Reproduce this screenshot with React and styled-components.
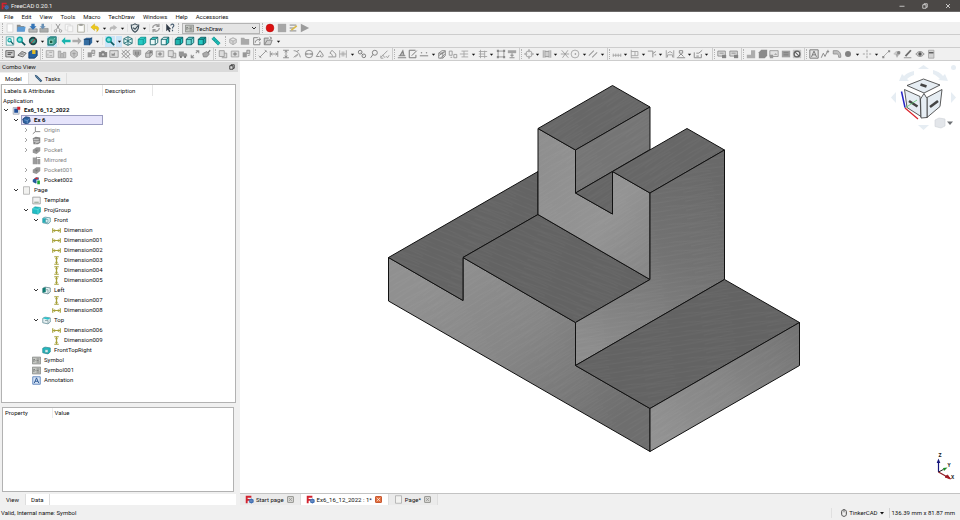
import React from "react";
import styled, { createGlobalStyle, css } from "styled-components";

const GlobalStyle = createGlobalStyle`
  * { box-sizing: border-box; }
  body {
    margin: 0;
    background: #f0f0f0;
    color: #111;
    font-family: Roboto, "Noto Sans", sans-serif;
    font-size: 6px;
    line-height: 10px;
  }
  button, select { font: inherit; color: inherit; }
`;

/* ---------- icons (12 x 12 grid) ---------- */

const TEAL = "#12a5a2";
const DARK = "#0b5a60";

const box = (faces) => (
  <>
    <path d="M1.5 4 4.5 1.5h6v6.500L7.500 10.500h-6z" fill={faces.body || "#e9f8f7"} />
    {faces.top && <path d="M1.500 4 4.500 1.500h6L7.500 4z" fill="#35d3cc" />}
    {faces.front && <path d="M1.500 4h6v6.500h-6z" fill="#27c9c3" />}
    {faces.right && <path d="M7.500 4l3-2.500V8l-3 2.500z" fill="#27c9c3" />}
    <path d="M1.500 4 4.500 1.500h6V8L7.500 10.500h-6zM1.500 4h6v6.500M7.500 4l3-2.500" fill="none" stroke={faces.edge || DARK} />
  </>
);

const glyphs = {
  newFile: <path d="M2.500 1h7v10h-7z" fill="#fdfdfd" stroke="#d2d2d2" />,
  folder: (
    <>
      <path d="M1 2h4l1 1.500h4V10H1z" fill="#8b8b88" />
      <path d="M2 4.500h9.500L10.500 10.500H1z" fill="#5c9bd4" />
    </>
  ),
  save: (
    <>
      <path d="M1 7h10v4H1z" fill="#b9bbbb" stroke="#777" strokeWidth=".7" />
      <path d="M4 1h4v3h2.200L6 8.200 1.800 4H4z" fill="#3575b7" />
    </>
  ),
  saveAs: (
    <>
      <path d="M1 6.500h10V11H1z" fill="#a9acac" stroke="#888" strokeWidth=".7" />
      <path d="M3 1h3v3h2L4.500 7.500 1 4h2z" fill="#6990b5" />
    </>
  ),
  cut: (
    <g fill="none" stroke="#989898">
      <path d="M3.500 1 8 8M8.500 1 4 8" strokeWidth="1.200" />
      <circle cx="3" cy="9.500" r="1.500" />
      <circle cx="9" cy="9.500" r="1.500" />
    </g>
  ),
  copy: (
    <g fill="#f7f7f7" stroke="#d7d7d7">
      <path d="M1.500 1.500h6v7h-6z" />
      <path d="M4.500 3.500h6v7h-6z" />
    </g>
  ),
  paste: (
    <>
      <path d="M2 2h8v9H2z" fill="#fbfbf9" stroke="#a3a397" />
      <path d="M4 1h4v2.500H4z" fill="#a0a09b" />
    </>
  ),
  undo: <path d="M5.500 1 1 5l4.500 4V6.500c3 0 3.500 1.500 2.500 4C12 7.500 11 3.500 5.500 3.500z" fill="#edc91b" stroke="#c9a000" strokeWidth=".5" />,
  redo: <path d="M6.500 2 11 5.500 6.500 9V7C3.500 7 3 8 4 10.500.500 7.500 2 4 6.500 4z" fill="#b9b9b9" />,
  shield: (
    <g fill="none" stroke="#3b4c57" strokeWidth="1.300">
      <path d="M1.500 2.500C4 2.500 5 1.500 6 1c1 .500 2 1.500 4.500 1.500 0 4-1 7-4.500 8.500C2.500 9.500 1.500 6.500 1.500 2.500z" fill="#dfe5e6" />
      <path d="M3.500 5.500 6 7.500 9.500 3.500" />
    </g>
  ),
  refresh: (
    <g fill="none" stroke="#979797" strokeWidth="1.500">
      <path d="M2 6a4 4 0 0 1 7-2.500M10 6a4 4 0 0 1-7 2.500" />
      <path d="M9.500 1v3h-3M2.500 11V8h3" />
    </g>
  ),
  whats: (
    <>
      <path d="M1.500 1v9l2-2 1.500 3 1.500-1L5 7.500h2.500z" fill="#303a45" />
      <path d="M7 3c0-2.500 4-2 3.500.500C10.300 4.500 9 4.500 9 6.500M9 8v2" fill="none" stroke="#445a6e" strokeWidth="1.400" />
    </>
  ),
  record: <circle cx="6" cy="6" r="4.700" fill="#dc1010" stroke="#b10a0a" strokeWidth=".6" />,
  stop: <path d="M1 1h10v10H1z" fill="#a7a7a7" />,
  edit: (
    <>
      <path d="M2 2.500h8M2 6h5M2 9.500h8" stroke="#888" strokeWidth="1.200" />
      <path d="M4 8.500 10.500 3.500" stroke="#d8b84b" strokeWidth="2" />
    </>
  ),
  play: <path d="M1 1v10l10-5z" fill="#9c9c9c" />,

  fitAll: (
    <>
      <path d="M1.500 1h9v10h-9z" fill="#eefafa" stroke="#3b8e91" strokeWidth=".8" />
      <circle cx="5.500" cy="5" r="2" fill="#b4efec" stroke={TEAL} strokeWidth="1.300" />
      <path d="M7 6.500 10 10" stroke={DARK} strokeWidth="1.500" />
    </>
  ),
  zoomSel: (
    <>
      <circle cx="4.500" cy="4.500" r="3" fill="#7fdcd8" stroke={TEAL} strokeWidth="1.700" />
      <path d="M7 7 11 11" stroke={DARK} strokeWidth="2" />
    </>
  ),
  drawStyle: (
    <>
      <circle cx="6" cy="6" r="5" fill="#20464a" />
      <path d="M3 4.500 6 3l3 1.500v3L6 9 3 7.500z" fill="#3b9c8b" />
      <path d="M3 9 9 3" stroke="#b44" strokeWidth="1.200" />
    </>
  ),
  bbox: (
    <>
      <path d="M1 3 4 1h7v7l-3 3H1z" fill="#3c9f91" stroke="#176a6b" />
      <path d="M3 5h4v4H3zM8 4l2-1.500" fill="#1e5d44" stroke="#b9efe6" strokeWidth=".8" />
    </>
  ),
  back: <path d="M5 1.500.500 6 5 10.500V7.500h6.500v-3H5z" fill="#19b4ae" />,
  forward: <path d="M7 1.500 11.500 6 7 10.500V7.500H.500v-3H7z" fill="#ababab" />,
  link: (
    <>
      <path d="M1 4 4 2h7v6l-3 3H1z" fill="#356da1" />
      <path d="M1 4h7v7M8 4l3-2" fill="none" stroke="#1b3e63" />
    </>
  ),
  iso: (
    <path d="M6 .800 11 3.200V8.800L6 11.200 1 8.800V3.200zM1 3.200 6 5.500l5-2.300M6 .800v10.400M1 8.800 6 6.500l5 2.300" fill="#dff6f5" stroke={DARK} strokeWidth=".9" />
  ),
  front: box({ front: true, top: true, right: true, body: "#35d3cc", edge: "#12938f" }),
  top: box({ top: true }),
  right: box({ right: true }),
  rear: box({ body: "#1fb5ae", right: true }),
  bottom: box({ body: "#72d9d4" }),
  left: box({ front: true, body: "#17a9a4" }),
  measure: (
    <>
      <path d="M1 3.500 3.500 1 11 8.500 8.500 11z" fill="#1cbab4" stroke="#0d8583" strokeWidth=".7" />
      <path d="M4 5.500l1-1M6 7.500l1-1" stroke="#075b5c" strokeWidth=".7" />
    </>
  ),
  part: <path d="M2 4 6 2l4 2v4L6 10.500 2 8zM2 4l4 2 4-2M6 6v4" fill="#d4d4d4" stroke="#a5a5a5" strokeWidth=".9" />,
  group: <path d="M1 2h4l1 1.500h5V10.500H1z" fill="#a9a9a9" />,
  linkMake: (
    <g fill="none" stroke="#808080" strokeWidth="1.100">
      <path d="M7 2H2v8.500h7.500V7" />
      <path d="M4 8c0-3 2-4 6-4M8 1.500 10.500 4 8 6" />
    </g>
  ),
  linkGroup: (
    <g fill="none" stroke="#808080" strokeWidth="1.100">
      <path d="M7 2.500H1.500v8H9L11 5H5L2 10" fill="#cfcfcf" />
      <path d="M8 1l2.500 1.500L8 4" />
    </g>
  ),

  pageDef: (
    <>
      <path d="M1 2h10v7.500H1z" fill="#d2d2d2" stroke="#555" />
      <path d="M3 4.500h6M3 6.500h4M7 10h4" stroke="#333" />
    </>
  ),
  pageTpl: (
    <g fill="#cfcfcf" stroke="#555">
      <path d="M1 7.500 6 3l5 2-4 4.500z" />
      <path d="M4 6h4" />
    </g>
  ),
  redraw: (
    <>
      <path d="M1 4 4 2h7v6L8 11H1z" fill="#2562a0" stroke="#143a66" />
      <path d="M5 1h4v5H5z" fill="#e4bd28" />
    </>
  ),
  sheet: <path d="M1.500 2h9v8h-9zM3.500 8V5.500M5.500 8h3M5 4h3.500" fill="#dedede" stroke="#a2a2a2" />,
  bars: <path d="M1.500 10.500v-8h3v3h3V4h3v6.500zM4.500 6v4M7.500 6v4" fill="#c2c2c2" stroke="#a0a0a0" />,
  disc: (
    <g stroke="#9a9a9a" fill="#c7c7c7">
      <path d="M2 3.500 6 1l4 2.500V8l-4 3-4-3z" />
      <path d="M4 5.500h4M6 4v5" />
    </g>
  ),
  chip: (
    <>
      <path d="M2 4h5v6H2z" fill="#979797" />
      <path d="M7 1.500h3.500v4H7zM8 8l3-1" fill="#c8c8c8" stroke="#8a8a8a" />
    </>
  ),
  camera: (
    <>
      <path d="M1 3.500h2.500L4.500 2h3l1 1.500H11V10H1z" fill="#8a8a8a" />
      <circle cx="6" cy="6.500" r="2" fill="#ccc" stroke="#666" strokeWidth=".7" />
    </>
  ),
  image: (
    <>
      <path d="M1 2h10v8H1z" fill="#ddd" stroke="#8d8d8d" />
      <path d="M3 8V5l2 1 2-2v4z" fill="#8e8e8e" />
    </>
  ),
  hatch: <path d="M1 1.500 10.500 11M1 5.500 6.500 11M5.500 1 11 6.500M1 10.500 10.500 1M1 6 6 1M6 11l5-5" stroke="#8f8f8f" strokeWidth="1.100" />,
  tree: (
    <>
      <path d="M1.500 1.500h9v5L6 10 1.500 6.500z" fill="#b4b4b4" stroke="#8b8b8b" strokeWidth=".8" />
      <path d="M4 3v4M6 3v6M8 3v4" stroke="#707070" />
    </>
  ),
  section: (
    <>
      <path d="M2 5 5 2h5v5L7 10H2zM2 5h5v5" fill="#c9c9c9" stroke="#888" />
      <circle cx="8" cy="4" r="1.500" fill="#7b7b7b" />
    </>
  ),
  detail: (
    <>
      <path d="M1.500 2.500h9v7h-9z" fill="#dedede" stroke="#a0a0a0" />
      <path d="M3.500 6h5M6 3.800v4.400" stroke="#7d7d7d" strokeWidth="1.300" />
    </>
  ),
  view: <path d="M1.500 2h6v7h-6zM7.500 5h3v5.500h-6" fill="#dcdcdc" stroke="#959595" />,
  truck: (
    <>
      <path d="M1 3h6v6H1zM7 5h3l1 2v2H7z" fill="#959595" />
      <circle cx="3.500" cy="9.500" r="1.200" fill="#666" />
      <circle cx="8.500" cy="9.500" r="1.200" fill="#666" />
    </>
  ),
  move: <path d="M2 10 4.500 7.500M7 5l3-3M7 2h3.500v3M1.500 7v3.500H5" fill="none" stroke="#909090" strokeWidth="1.300" />,
  share: (
    <>
      <path d="M2 5.500 7 3l3 3-3 3.500H3z" fill="#aaa" stroke="#868686" />
      <path d="M8 5 11 1.500" stroke="#777" strokeWidth="1.500" />
    </>
  ),
  length: <path d="M2 10 10 2M1 8l3 3M8 1l3 3" stroke="#999" strokeWidth="1.200" />,
  horiz: <path d="M1.500 2.500v7M10.500 2.500v7M1.500 6h9M4 4.500 2 6l2 1.500M8 4.500 10 6 8 7.500" fill="none" stroke="#969696" strokeWidth="1.100" />,
  vert: <path d="M2.500 1.500h7M2.500 10.500h7M6 1.500v9M4.500 4 6 2l1.500 2M4.500 8 6 10l1.500-2" fill="none" stroke="#8c8c8c" strokeWidth="1.100" />,
  radius: <path d="M2 10 7 6M2 2c4 0 7 3 8 8M4 9.500l3.500-3M5.500 3 8.500 1.500" fill="none" stroke="#999" strokeWidth="1.200" />,
  diameter: (
    <g fill="none" stroke="#8c8c8c" strokeWidth="1.100">
      <circle cx="6" cy="6" r="4.500" />
      <path d="M1.500 6h9M3.500 4.800v2.400M8.500 4.800v2.400" />
    </g>
  ),
  angle: <path d="M1.500 9 6 2l3 4c1.500 2 1 3.500-1 3.500-2 0-2-2-.500-2.500M1.500 9h4" fill="none" stroke="#929292" strokeWidth="1.200" />,
  angle3: <path d="M1.500 9.500h9V6L6 1.500 3.500 5c2 .500 3 2 3 4" fill="none" stroke="#929292" strokeWidth="1.100" />,
  extent: <path d="M2 1.500v9M10 1.500v9M5 3v6M7 3v6M2 6h8" fill="none" stroke="#a2a2a2" />,
  chain: (
    <g fill="none" stroke="#808080" strokeWidth="1.200">
      <circle cx="3.800" cy="3.800" r="2.200" />
      <circle cx="8.200" cy="8.200" r="2.200" />
      <path d="M4.500 4.500l3 3" />
    </g>
  ),
  balloon: (
    <g fill="none" stroke="#858585" strokeWidth="1.200">
      <circle cx="7" cy="4.500" r="3" />
      <path d="M4.800 6.500 2 10.500" />
    </g>
  ),
  axo: <path d="M1.500 9.500 9 2M3 7l3 3.500M7 8.500l2 2 2-3M1 8v3h3" fill="none" stroke="#999" strokeWidth="1.100" />,
  finish: <path d="M3.500 8 7 2l1.500 6zM1 10.500h10M2 8h8" fill="#b7b7b7" stroke="#848484" strokeWidth="1.300" />,
  note: <path d="M9 1.500H1.500v9h8V7M4.500 8 10.500 2" fill="none" stroke="#7b7b7b" strokeWidth="1.200" />,
  cosmetic: (
    <g fill="#8d8d8d">
      <path d="M1 7.500h10v1.300H1z" />
      <circle cx="3" cy="4.500" r=".9" />
      <circle cx="9" cy="4.500" r=".9" />
    </g>
  ),
  cube: <path d="M2 5 6 2h4v6l-3 3H2zM4 6l5-3M2 8l8-5M4 11l6-5M2 5h5v6" fill="none" stroke="#898989" strokeWidth="1.100" />,
  blocks: <path d="M1.500 2.500h3.500v5H1.500zM7 6.500h3.500v4H7zM3 10h2" fill="none" stroke="#939393" />,
  centre: <path d="M3 2.500h8M1 6h10M3 9.500h8M6 2.500v7" fill="none" stroke="#a0a0a0" />,
  lines: <path d="M1 3h10M1 6h7M1 9h10M3 1v10M8 2v9" fill="none" stroke="#a0a0a0" />,
  frame: (
    <>
      <path d="M2.500 2.500h7v7h-7z" fill="none" stroke="#8c8c8c" />
      <path d="M1 1h2.500v2.500H1zM8.500 1H11v2.500H8.500zM1 8.500h2.500V11H1zM8.500 8.500H11V11H8.500z" fill="#8a8a8a" />
    </>
  ),
  weld: (
    <>
      <path d="M1 1.500h10V5H1z" fill="#a4a4a4" />
      <path d="M3 10.500h6M6 5v5M4 7.500h4" fill="none" stroke="#8f8f8f" strokeWidth="1.200" />
    </>
  ),
  target: (
    <g fill="none" stroke="#969696">
      <circle cx="6" cy="6" r="3.800" />
      <path d="M6 0v4M6 8v4M0 6h4M8 6h4" />
    </g>
  ),
  thread: (
    <>
      <path d="M3.500 2h5v8h-5z" fill="#cfcfcf" />
      <path d="M1.500 1.500v9M3.500 1.500v9M8.500 1.500v9M10.500 1.500v9M3.500 3h5M3.500 9h5" fill="none" stroke="#9c9c9c" strokeWidth="1.100" />
    </>
  ),
  cross: <path d="M2 1.500 10 10.500M9.500 1.500 3 10.500M1 6h10" fill="none" stroke="#979797" />,
  circle: (
    <>
      <circle cx="6" cy="6" r="4.700" fill="none" stroke="#a0a0a0" />
      <circle cx="6.500" cy="6" r="1" fill="#888" />
    </>
  ),
  parallel: <path d="M1 8 7 2M5 10l6-6" stroke="#9b9b9b" strokeWidth="1.300" />,
  chainDim: <path d="M1 7.500h10M1.500 5.500v4M4.500 5.500v4M7.500 5.500v4M10.500 5.500v4" stroke="#a0a0a0" />,
  coord: <path d="M1.500 1v10M1.500 3h8v5h-8M6 3v5M1.500 10.500h9" fill="none" stroke="#a0a0a0" />,
  chamfer: <path d="M1 2.500h6V10M7 5.500l3.500-2.500M9 7h2" fill="none" stroke="#949494" strokeWidth="1.200" />,
  arc: <path d="M1.500 1.500v9M10.500 1.500v9M3 5l3-2 3 2M3 10V7h6v3" fill="none" stroke="#969696" />,
  person: <path d="M4 5V2h4v3zM3 9l3-3 3 3M1 10.500h10" fill="none" stroke="#8e8e8e" strokeWidth="1.200" />,
  plot: <path d="M1.500 4v6.500H10V6M4 8.500h3M4 5h3l4-3.500" fill="none" stroke="#8f8f8f" strokeWidth="1.200" />,
  stack: (
    <>
      <path d="M1 2.500h9v6H1zM3 5h5" fill="#dadada" stroke="#888" />
      <path d="M6 7h5v4H6z" fill="#858585" />
    </>
  ),
  stairs: <path d="M1 7h5V1.500h5V11H1z" fill="#acacac" />,
  stairsDark: <path d="M1 4 4 1h7v7l-3 3H1z" fill="#898989" />,
  landscape: (
    <>
      <path d="M1 2h10v7H1z" fill="#e2e2e2" stroke="#919191" />
      <path d="M1 7h4v4H1zM6 7l2-2 2 2z" fill="#989898" />
    </>
  ),
  filled: (
    <>
      <path d="M1 2h10v8H1z" fill="#9e9e9e" />
      <path d="M3 4.500h6M3 7h6" stroke="#777" />
    </>
  ),
  forbid: (
    <>
      <path d="M1 1h10v10H1z" fill="#c4c4c4" />
      <circle cx="6" cy="6" r="3.500" fill="#eee" stroke="#606060" strokeWidth="1.500" />
      <path d="M3.500 3.500l5 5" stroke="#606060" strokeWidth="1.300" />
    </>
  ),
  letterA: <path d="M1 1h10v10H1zM3 9.500 6 2.500l3 7M4 7h4" fill="#e4e4e4" stroke="#7d7d7d" strokeWidth="1.200" />,
  leader: <path d="M1.500 10.500 4 5l2 4 3-6.500M8 3h3M9.500 1v4" fill="none" stroke="#8e8e8e" strokeWidth="1.200" />,
  rich: <path d="M1.500 2h5c3 1 4.500 4 4 8H8c0-3-1-4-2.500-4h-4z" fill="#bebebe" stroke="#8b8b8b" />,
  vertex: <circle cx="6" cy="6" r="3.600" fill="#828282" />,
  midline: <path d="M6 1v3M6 5v2M6 8v3M1 6h2.500M8.500 6H11" stroke="#929292" />,
  line2: (
    <>
      <path d="M3 9 9 3" stroke="#a5a5a5" />
      <path d="M1.500 8.500h2.500V11H1.500zM8.500 1.500H11V4H8.500z" fill="#8b8b8b" />
    </>
  ),
  eraser: (
    <>
      <path d="M1.500 6 5 2.500h5V6L7 9z" fill="#c7c7c7" />
      <circle cx="8" cy="4.500" r="2" fill="#858585" />
      <path d="M6 6v4" stroke="#888" />
    </>
  ),
  pen: (
    <>
      <path d="M3 8.500 9.500 1.500" stroke="#6c6c6c" strokeWidth="2.200" />
      <path d="M1 10.500h9" stroke="#8a8a8a" />
    </>
  ),
  eye: (
    <>
      <path d="M1 6c3-4 7-4 10 0-3 4-7 4-10 0z" fill="#cacaca" stroke="#8a8a8a" />
      <circle cx="6" cy="6" r="2" fill="#555" />
    </>
  ),
  drum: (
    <>
      <path d="M3 1.500h6.500v9.500H3z" fill="#d2d2d2" stroke="#a3a3a3" />
      <path d="M3.500 4.500h5.500" stroke="#555" strokeWidth="1.600" />
    </>
  ),

  document: (
    <>
      <path d="M1.500 2h8v9h-8z" fill="#dfe3ec" stroke="#7c8697" strokeWidth=".7" />
      <path d="M3 3.500h5v5.500H3z" fill="#22529a" />
      <path d="M7 1h4v4H7z" fill="#d3202b" />
    </>
  ),
  body: (
    <>
      <path d="M1 4 5 1l5 1 1 5-4 4-5-2z" fill="#2e62a1" stroke="#173c6d" />
      <path d="M3 5 7 6l3-2M7 6v4" fill="none" stroke="#91b7df" strokeWidth=".8" />
    </>
  ),
  origin: <path d="M4.500 1v6.500H11M4.500 7.500 1 10.500" fill="none" stroke="#808080" strokeWidth="1.200" />,
  pad: (
    <>
      <path d="M1 3 5 1l6 1v7L8 11H2z" fill="#858585" />
      <path d="M2 4.500h7M2 7h7M4 9.500l6-2" stroke="#e1e1e1" />
    </>
  ),
  pocket: (
    <>
      <path d="M1 5 6 1.500h5v5L6 10.500 1 9z" fill="#969696" />
      <path d="M4 5h4L6 7.500z" fill="#777" />
    </>
  ),
  mirrored: (
    <>
      <path d="M1 2h4.500v9H1zM7 4h4v7H7z" fill="#9b9b9b" />
      <path d="M6 1v10M7 2h4" stroke="#777" />
    </>
  ),
  pocketOn: (
    <>
      <path d="M1 5 5 2h4v7l-4 1-4-2z" fill="#24599b" />
      <path d="M3 3.500 6 1.500l3 1-2.500 2z" fill="#c9303a" />
      <path d="M6 5h5v6.500H6z" fill="#fff" />
      <path d="M7 6h3.500v5H7z" fill="#1aa53a" />
    </>
  ),
  page: <path d="M2 1h8v10H2z" fill="#f2f2f0" stroke="#a7a7a7" />,
  template: (
    <>
      <path d="M1 1.500h10v9H1z" fill="#f1f1f1" stroke="#909090" />
      <path d="M3 7.500h6v2H3z" fill="#a7b5a7" />
    </>
  ),
  projGroup: (
    <>
      <path d="M.500 3.500 4 1l7.500 1v6L8 11 .500 9.500z" fill="#20bdc4" stroke="#158b94" strokeWidth=".6" />
      <path d="M.500 3.500 8 4.500l3.500-2.500M8 4.500V11" fill="none" stroke="#7ce8ea" strokeWidth=".8" />
    </>
  ),
  projFront: (
    <>
      <path d="M1 3 4 1.500l7 1v5.500L8 10.500 1 9z" fill="#e4f3f4" stroke="#4b8f9b" />
      <path d="M1 3h5v6H1z" fill="#23aeb8" />
      <path d="M4.500 4.500h3.500v4H4.500z" fill="#d5f2f4" stroke="#44808a" strokeWidth=".7" />
    </>
  ),
  projLeft: (
    <>
      <path d="M1 3 4 1.500l7 1v5.500L8 10.500 1 9z" fill="#e4f3f4" stroke="#5a7f88" />
      <path d="M1 3l4-1.500V8l-4 1z" fill="#0f7b72" />
      <path d="M5 5h3v5" fill="none" stroke="#7c949a" />
    </>
  ),
  projTop: (
    <>
      <path d="M1 3 4 1.500l7 1v5.500L8 10.500 1 9z" fill="#e4eef0" stroke="#5d8a94" />
      <path d="M1 3 4 1.500l7 1L8 5z" fill="#25c3cc" />
      <path d="M4 6h4v4" fill="none" stroke="#7c949a" />
    </>
  ),
  projIso: (
    <>
      <path d="M1 3 4 1.500l7 1v5.500L8 10.500 1 9z" fill="#1fb9bf" stroke="#2c8790" />
      <path d="M4 5h4v3.500H4z" fill="#dff5f5" stroke="#4c8f96" strokeWidth=".7" />
    </>
  ),
  symbol: (
    <>
      <path d="M.500 1.500h11v9H.500z" fill="#c3c6c1" stroke="#7c7f7c" />
      <path d="M2.500 8V4l2 2M6 4h4M6 6h3M6 8h4" fill="none" stroke="#666" strokeWidth=".9" />
    </>
  ),
  annotation: (
    <>
      <path d="M1 1h10v10H1z" fill="#d7e4f6" stroke="#3d6baf" />
      <path d="M3 9.500 6 2.500l3 7M4 7h4" fill="none" stroke="#21508f" strokeWidth="1.200" />
    </>
  ),
  dimH: <path d="M1 3v6M11 3v6M1 6h10M3.500 4.500v3M8.500 4.500v3" fill="none" stroke="#a7a13a" strokeWidth="1.600" />,
  dimV: <path d="M3 1h6M3 11h6M6 1v10M4.500 3.500h3M4.500 8.500h3" fill="none" stroke="#a7a13a" strokeWidth="1.600" />,
  freecad: (
    <>
      <path d="M1 1h7.500v2.500h-5v1.800h3v2.200h-3V11H1z" fill="#d2232f" />
      <circle cx="8.500" cy="8" r="2.200" fill="none" stroke="#3f6fb4" strokeWidth="1.800" />
      <path d="M8.500 4.500v7M5 8h7M6 5.500l5 5M11 5.500l-5 5" stroke="#3f6fb4" strokeWidth=".7" />
    </>
  ),
  pencilBlue: (
    <>
      <path d="M1 1 4 2l7 7-2 2-7-7z" fill="#2b5276" />
      <path d="M3 3l6 6" stroke="#7ea5c4" strokeWidth=".8" />
    </>
  ),
  caret: <path d="M2 4h8L6 9z" fill="currentColor" />,
  chevDown: <path d="M2 4l4 4 4-4" fill="none" stroke="currentColor" strokeWidth="1.700" />,
  chevRight: <path d="M4 2l4 4-4 4" fill="none" stroke="#8a8a8a" strokeWidth="1.600" />,
  minimise: <path d="M1 6.500h10" stroke="currentColor" strokeWidth="1.400" />,
  restore: <path d="M1.500 3.500h6.500v7H1.500zM4 3.500v-2h6.500v7H8" fill="none" stroke="currentColor" strokeWidth="1.400" />,
  close: <path d="M2 2l8 8M10 2l-8 8" stroke="currentColor" strokeWidth="1.500" />,
  mouse: (
    <g fill="none" stroke="#333">
      <path d="M2.500 4c0-4 7-4 7 0v4c0 4-7 4-7 0z" strokeWidth="1.300" />
      <path d="M6 1v4" />
    </g>
  ),
};

const Svg = styled.svg`
  display: block;
  flex: none;
  width: ${(p) => p.$size}px;
  height: ${(p) => p.$size}px;
`;

const Icon = ({ name, size = 9 }) => (
  <Svg viewBox="0 0 12 12" $size={size} aria-hidden="true">
    {glyphs[name]}
  </Svg>
);

/* ---------- frame ---------- */

const Window = styled.div`
  display: flex;
  flex-direction: column;
  min-height: 100vh;
`;

const plainButton = css`
  border: 0;
  padding: 0;
  background: none;
  display: flex;
  align-items: center;
  justify-content: center;
`;

const TitleBar = styled.header`
  display: flex;
  align-items: center;
  height: 12px;
  padding: 0 9px 0 1px;
  gap: 2px;
  background: #4b4846;
  border-bottom: 1px solid #6b6968;
  color: #f0f0f0;
`;

const Title = styled.h1`
  flex: 1;
  margin: 0;
  font-size: 6px;
  font-weight: 400;
`;

const WindowButtons = styled.div`
  display: flex;
  gap: 16px;
`;

const WindowButton = styled.button`
  ${plainButton}
  width: 7px;
  height: 8px;
`;

const MenuBar = styled.nav`
  display: flex;
  height: 10px;
  padding: 0 4px;
  gap: 8px;
  background: #fff;
`;

const MenuButton = styled.button`
  ${plainButton}
`;

const Toolbar = styled.div`
  display: flex;
  height: 13px;
  padding-left: 1px;
  background: #f0f0f0;
  border-bottom: 1px solid #cdcdcd;
`;

const ToolGroup = styled.div`
  display: flex;
  align-items: center;
  width: ${(p) => p.$width}px;
  padding: 0 2px 0 1px;
  border-right: 1px solid ${(p) => (p.$divided ? "#cdcdcd" : "transparent")};
`;

const Handle = styled.span`
  flex: none;
  align-self: center;
  width: 2px;
  height: 10px;
  margin-right: 1px;
  border-left: 1px dotted #b4b4b4;
`;

const ToolItems = styled.div`
  display: flex;
  flex: 1;
  align-items: center;
  justify-content: space-between;
`;

const ToolButton = styled.button`
  ${plainButton}
  width: ${(p) => (p.$narrow ? 6 : 10)}px;
  height: 11px;
  background: ${(p) => (p.$active ? "#cbe5f8" : "none")};
`;

const ToolDivider = styled.span`
  width: 1px;
  height: 8px;
  background: #e2e2e2;
`;

const Tools = ({ items, width, divided }) => (
  <ToolGroup $width={width} $divided={divided}>
    <Handle />
    <ToolItems>
      {items.split(" ").map((entry, i) => {
        if (entry === "|") return <ToolDivider key={i} />;
        const active = entry.endsWith("*");
        const name = entry.replace("*", "");
        const narrow = name === "v";
        return (
          <ToolButton key={i} $narrow={narrow} $active={active} aria-label={narrow ? "More options" : name}>
            <Icon name={narrow ? "caret" : name} size={narrow ? 5 : 10} />
          </ToolButton>
        );
      })}
    </ToolItems>
  </ToolGroup>
);

const WorkbenchPicker = styled.label`
  display: flex;
  align-items: center;
  align-self: center;
  width: 78px;
  height: 11px;
  margin: 0 1px;
  padding: 0 2px;
  gap: 2px;
  background: #e4e4e4;
  border: 1px solid #b4b4b4;
`;

const WorkbenchSelect = styled.select`
  appearance: none;
  flex: 1;
  min-width: 0;
  height: 9px;
  padding: 0;
  border: 0;
  background: none;
  line-height: 9px;
`;

const Main = styled.div`
  display: flex;
  flex: 1;
`;

/* ---------- combo view ---------- */

const SidePanel = styled.aside`
  display: flex;
  flex: none;
  flex-direction: column;
  width: 238px;
  padding-top: 1px;
`;

const PanelTitle = styled.div`
  display: flex;
  align-items: center;
  justify-content: space-between;
  height: 10px;
  padding: 0 3px 0 2px;
  background: #dadada;
`;

const PanelHeading = styled.h2`
  margin: 0;
  font-size: 6px;
  font-weight: 400;
`;

const PanelTabs = styled.div`
  display: flex;
  height: 12px;
  padding-top: 1px;
`;

const PanelTab = styled.button`
  ${plainButton}
  gap: 2px;
  padding: 0 6px 0 5px;
  background: ${(p) => (p.$active ? "#fff" : "#f0f0f0")};
  border-right: 1px solid #dedede;
`;

const TreeFrame = styled.div`
  flex: 1;
  margin: 0 2px 0 1px;
  background: #fff;
  border: 1px solid #b2b2b2;
`;

const TreeHeader = styled.div`
  display: grid;
  grid-template-columns: 101px 50px 1fr;
  height: 11px;
`;

const HeaderCell = styled.span`
  padding: 1px 2px 0;
  border-right: 1px solid ${(p) => (p.$last ? "transparent" : "#e6e6e6")};
`;

const RootLabel = styled.div`
  height: 9px;
  padding-left: 1px;
`;

const TreeList = styled.ul`
  margin: 0;
  padding: 0;
  list-style: none;
`;

const TreeRow = styled.li`
  display: flex;
  height: 10px;
  padding-left: ${(p) => p.$level * 10}px;
  color: ${(p) => (p.$dim ? "#858585" : "#111")};
  font-weight: ${(p) => (p.$bold ? 700 : 400)};
`;

const Expander = styled.button`
  ${plainButton}
  width: 8px;
  margin-right: 1px;
`;

const ExpanderGap = styled.span`
  width: 9px;
`;

const TreeLabel = styled.span`
  display: flex;
  align-items: center;
  gap: 3px;
  min-width: ${(p) => (p.$selected ? 82 : 0)}px;
  padding-left: 1px;
  background: ${(p) => (p.$selected ? "#e6e4fb" : "none")};
  outline: ${(p) => (p.$selected ? "1px solid #9a9cc0" : "none")};
  outline-offset: -1px;
`;

const PropertyFrame = styled.div`
  height: 85px;
  margin: 4px 4px 0 2px;
  background: #fff;
  border: 1px solid #b2b2b2;
`;

const PropertyTable = styled.table`
  width: 100%;
  border-collapse: collapse;

  th {
    height: 10px;
    padding: 0 2px;
    font-weight: 400;
    text-align: left;
  }
  th:first-child {
    width: 49px;
    border-right: 1px solid #ececec;
  }
`;

const PropertyTabs = styled.div`
  display: flex;
  height: 11px;
  margin: 2px 2px 0 1px;
  background: #fff;
`;

const tree = [
  [0, "down", "document", "Ex6_16_12_2022", "bold"],
  [1, "down", "body", "Ex 6", "selected"],
  [2, "right", "origin", "Origin", "dim"],
  [2, "right", "pad", "Pad", "dim"],
  [2, "right", "pocket", "Pocket", "dim"],
  [2, "", "mirrored", "Mirrored", "dim"],
  [2, "right", "pocket", "Pocket001", "dim"],
  [2, "right", "pocketOn", "Pocket002"],
  [1, "down", "page", "Page"],
  [2, "", "template", "Template"],
  [2, "down", "projGroup", "ProjGroup"],
  [3, "down", "projFront", "Front"],
  [4, "", "dimH", "Dimension"],
  [4, "", "dimH", "Dimension001"],
  [4, "", "dimH", "Dimension002"],
  [4, "", "dimV", "Dimension003"],
  [4, "", "dimV", "Dimension004"],
  [4, "", "dimV", "Dimension005"],
  [3, "down", "projLeft", "Left"],
  [4, "", "dimV", "Dimension007"],
  [4, "", "dimH", "Dimension008"],
  [3, "down", "projTop", "Top"],
  [4, "", "dimH", "Dimension006"],
  [4, "", "dimV", "Dimension009"],
  [3, "", "projIso", "FrontTopRight"],
  [2, "", "symbol", "Symbol"],
  [2, "", "symbol", "Symbol001"],
  [2, "", "annotation", "Annotation"],
];

const ComboView = () => (
  <SidePanel>
    <PanelTitle>
      <PanelHeading>Combo View</PanelHeading>
      <WindowButton aria-label="Float panel">
        <Icon name="restore" size={6} />
      </WindowButton>
    </PanelTitle>
    <PanelTabs>
      <PanelTab $active>Model</PanelTab>
      <PanelTab>
        <Icon name="pencilBlue" size={9} />
        Tasks
      </PanelTab>
    </PanelTabs>
    <TreeFrame>
      <TreeHeader>
        <HeaderCell>Labels &amp; Attributes</HeaderCell>
        <HeaderCell>Description</HeaderCell>
        <HeaderCell $last />
      </TreeHeader>
      <RootLabel>Application</RootLabel>
      <TreeList>
        {tree.map(([level, arrow, icon, label, state]) => (
          <TreeRow key={label} $level={level} $dim={state === "dim"} $bold={state === "bold" || state === "selected"}>
            {arrow ? (
              <Expander aria-label={`Toggle ${label}`}>
                <Icon name={arrow === "down" ? "chevDown" : "chevRight"} size={6} />
              </Expander>
            ) : (
              <ExpanderGap />
            )}
            <TreeLabel $selected={state === "selected"}>
              <Icon name={icon} size={9} />
              {label}
            </TreeLabel>
          </TreeRow>
        ))}
      </TreeList>
    </TreeFrame>
    <PropertyFrame>
      <PropertyTable>
        <thead>
          <tr>
            <th>Property</th>
            <th>Value</th>
          </tr>
        </thead>
      </PropertyTable>
    </PropertyFrame>
    <PropertyTabs>
      <PanelTab>View</PanelTab>
      <PanelTab $active>Data</PanelTab>
    </PropertyTabs>
  </SidePanel>
);

/* ---------- 3D view ---------- */

const Workspace = styled.main`
  display: flex;
  flex: 1;
  flex-direction: column;
  min-width: 0;
  margin-left: 2px;
`;

const Viewport = styled.section`
  position: relative;
  display: flex;
  flex: 1;
  background: #fff;
  border-bottom: 1px solid #c3c3c3;
`;

const Model = styled.svg`
  flex: 1;
  min-width: 0;
  aspect-ratio: 720 / 432;
`;

const NavCube = styled.svg`
  position: absolute;
  top: 2px;
  right: 0;
  width: 72px;
  height: 72px;
`;

const AxisCross = styled.svg`
  position: absolute;
  right: 3px;
  bottom: 10px;
  width: 24px;
  height: 32px;
`;

const faces = [
  ["388.5,257.5 463,300.5 463,257.5 575.5,322.5 575.5,365.5 650,408.5 650,451.5 388.5,301", "url(#shadeFront)", "grainUp"],
  ["388.5,257.5 538,171.5 538,214.5 463,257.5 463,300.5", "#646464", "grainDown"],
  ["463,257.5 538,214.5 650,279.5 575.5,322.5", "#636363", "grainDown"],
  ["538,128.5 575.5,150 575.5,193 612.5,214 612.5,171.5 650,193 650,279.5 538,214.5", "url(#shadeTall)", "grainUp"],
  ["538,128.5 612.5,85.5 650,107 575.5,150", "#676767", "grainUp"],
  ["575.5,150 650,107 650,149.5 575.5,193", "#757575", "grainUp"],
  ["575.5,193 612.5,171.5 612.5,214", "#656565", "grainUp"],
  ["612.5,171.5 687,128.5 724.5,150 650,193", "#676767", "grainUp"],
  ["650,193 724.5,150 724.5,279.5 575.5,365.5 575.5,322.5 650,279.5", "url(#shadeRight)", "grainFlat"],
  ["575.5,365.5 724.5,279.5 799.5,322.5 650,408.5", "#636363", "grainFlat"],
  ["650,408.5 799.5,322.5 799.5,365.5 650,451.5", "url(#shadeStep)", "grainUp"],
];

const SolidModel = () => (
  <Model viewBox="240 61 720 432" role="img" aria-label="Isometric view of the part">
    <defs>
      <linearGradient id="shadeFront" gradientUnits="userSpaceOnUse" x1="430" y1="280" x2="600" y2="440">
        <stop offset="0" stopColor="#909090" />
        <stop offset=".45" stopColor="#868686" />
        <stop offset="1" stopColor="#6e6e6e" />
      </linearGradient>
      <linearGradient id="shadeTall" x1="0" y1="0" x2="1" y2="1">
        <stop offset="0" stopColor="#8e8e8e" />
        <stop offset=".6" stopColor="#949494" />
        <stop offset="1" stopColor="#858585" />
      </linearGradient>
      <linearGradient id="shadeRight" gradientUnits="userSpaceOnUse" x1="700" y1="170" x2="600" y2="350">
        <stop offset="0" stopColor="#696969" />
        <stop offset=".45" stopColor="#737373" />
        <stop offset="1" stopColor="#8c8c8c" />
      </linearGradient>
      <linearGradient id="shadeStep" x1="0" y1="1" x2="1" y2="0">
        <stop offset="0" stopColor="#949494" />
        <stop offset=".5" stopColor="#868686" />
        <stop offset="1" stopColor="#727272" />
      </linearGradient>
      <pattern id="grainUp" width="64" height="9" patternUnits="userSpaceOnUse" patternTransform="rotate(-32)">
        <path d="M0 1q16 3 32 0t32 0M0 4q16-1 32 0t32 0M10 7q12-2 30 0" fill="none" stroke="#fff" strokeOpacity=".035" />
      </pattern>
      <pattern id="grainDown" width="64" height="9" patternUnits="userSpaceOnUse" patternTransform="rotate(22)">
        <path d="M0 1q16 3 32 0t32 0M0 4q16-1 32 0t32 0M10 7q12-2 30 0" fill="none" stroke="#fff" strokeOpacity=".035" />
      </pattern>
      <pattern id="grainFlat" width="64" height="9" patternUnits="userSpaceOnUse" patternTransform="rotate(-8)">
        <path d="M0 1q16 3 32 0t32 0M0 4q16-1 32 0t32 0M10 7q12-2 30 0" fill="none" stroke="#fff" strokeOpacity=".035" />
      </pattern>
    </defs>
    {faces.map(([points, fill, grain]) => (
      <g key={points}>
        <polygon points={points} fill={fill} />
        <polygon points={points} fill={`url(#${grain})`} stroke="#111" strokeLinejoin="round" />
      </g>
    ))}
  </Model>
);

const Navigation = () => (
  <NavCube viewBox="888 63 72 72" aria-label="Navigation cube">
    <g fill="#e6edf3">
      <path d="M918 69l5.500-4 5.500 4zM918 125h11l-5.500 5zM896 92v11l-5-5.500zM951 92v11l5-5.500z" />
      <path d="M899 81l3-7 2 2c3-3 6-4 10-5v4c-3 1-5 2-7 4l2 2zM948 81l-3-7-2 2c-2-3-6-5-10-6v4c3 1 5 3 7 5l-2 1z" />
      <circle cx="953.500" cy="67.500" r="2.500" />
    </g>
    <g fill="#e6edf3" stroke="#333" strokeWidth=".8" strokeLinejoin="round">
      <path d="M904.500 89.500 920 96.500l1 20-14-9z" />
      <path d="M907 85.500 923.500 79 940 85l-16 8z" />
      <path d="M927 97.500l15-8-2 17-13 11z" />
      <path d="M920.500 99 924 93.500l3 5v19l-6 .500z" />
    </g>
    <g stroke="#444" strokeWidth="2.600">
      <path d="M909 101l8.500 5.500" />
      <path d="M930 107l8-6" />
      <path d="M920.500 84.500l6 2" />
    </g>
    <path d="M905 108l12-8" stroke="#5ccc70" strokeWidth=".8" />
    <path d="M901.500 91.500l3.500 16" stroke="#2424c4" strokeWidth="1.500" />
    <path d="M905 108l13 11" stroke="#d9222a" strokeWidth="1.200" />
    <path d="M935 120l4-2 6 1v7l-4 2-6-1.500z" fill="#e3e6ea" stroke="#ccd1d7" strokeWidth=".6" />
    <path d="M947 121.500h6l-3 3.500z" fill="#6d7074" />
  </NavCube>
);

const Axes = () => (
  <AxisCross viewBox="933 451 24 32" aria-label="Axis cross">
    <path d="M938.500 472V461" stroke="#16167c" strokeWidth="1.200" />
    <path d="M936.700 463l1.800-4.500 1.800 4.500z" fill="#16167c" />
    <path d="M938.500 472l5-2.600" stroke="#222" />
    <path d="M943 468l4.500-.500-3.500 3.500z" fill="#198a25" />
    <path d="M938.500 472l8 4.500" stroke="#8d1c26" strokeWidth="1.200" />
    <path d="M945 477l5.500 2-3-4z" fill="#a01722" stroke="#a01722" />
    <g fill="#222" fontSize="5" fontWeight="700">
      <text x="938.500" y="456.500">Z</text>
      <text x="947.500" y="466.500">Y</text>
      <text x="951" y="479">X</text>
    </g>
  </AxisCross>
);

const DocumentTabs = styled.div`
  display: flex;
  height: 11px;
`;

const DocumentTab = styled.div`
  display: flex;
  align-items: center;
  gap: 3px;
  padding: 0 6px 0 5px;
  background: ${(p) => (p.$active ? "#fff" : "#ebebeb")};
  border-right: 1px solid #dedede;
`;

const TabTitle = styled.button`
  ${plainButton}
  gap: 2px;
`;

const TabClose = styled.button`
  ${plainButton}
  width: 7px;
  height: 7px;
  border: 1px solid ${(p) => (p.$active ? "#c95a32" : "#9c9c98")};
  border-radius: 1px;
  background: ${(p) => (p.$active ? "#e2703f" : "#d5d5d2")};
  color: ${(p) => (p.$active ? "#fff" : "#8a8a86")};
`;

const documents = [
  ["freecad", "Start page", false],
  ["freecad", "Ex6_16_12_2022 : 1*", true],
  ["page", "Page*", false],
];

/* ---------- status bar ---------- */

const StatusBar = styled.footer`
  display: flex;
  align-items: center;
  height: 15px;
  padding: 0 5px 0 1px;
`;

const StatusText = styled.span`
  flex: 1;
`;

const NavStyle = styled.button`
  ${plainButton}
  gap: 1px;
  padding: 0 4px 0 8px;
  border-left: 1px solid #e0e0e0;
  border-right: 1px solid #d2d2d2;
`;

const Dimensions = styled.span`
  padding-left: 2px;
`;

const menus = ["File", "Edit", "View", "Tools", "Macro", "TechDraw", "Windows", "Help", "Accessories"];

export default function App() {
  return (
    <Window>
      <GlobalStyle />
      <TitleBar>
        <Icon name="freecad" size={8} />
        <Title>FreeCAD 0.20.1</Title>
        <WindowButtons>
          {["minimise", "restore", "close"].map((name) => (
            <WindowButton key={name} aria-label={name}>
              <Icon name={name} size={6} />
            </WindowButton>
          ))}
        </WindowButtons>
      </TitleBar>
      <MenuBar>
        {menus.map((name) => (
          <MenuButton key={name}>{name}</MenuButton>
        ))}
      </MenuBar>

      <Toolbar>
        <Tools width={177} items="newFile folder save saveAs | cut copy paste | undo v redo v | shield v | refresh | whats" />
        <Handle />
        <WorkbenchPicker>
          <Icon name="symbol" size={9} />
          <WorkbenchSelect aria-label="Workbench" defaultValue="TechDraw">
            <option>TechDraw</option>
          </WorkbenchSelect>
          <Icon name="chevDown" size={6} />
        </WorkbenchPicker>
        <Tools width={52} items="record stop edit play" />
      </Toolbar>
      <Toolbar>
        <Tools
          width={223}
          items="fitAll zoomSel drawStyle v bbox* | back forward link v | zoomSel* v* iso | front top right | rear bottom left | measure"
        />
        <Tools width={60} items="part group linkMake linkGroup v" />
      </Toolbar>
      <Toolbar>
        <Tools divided width={40} items="pageDef pageTpl redraw" />
        <Tools divided width={41} items="sheet bars disc" />
        <Tools divided width={132} items="chip camera image hatch tree section detail view truck move share" />
        <Tools divided width={40} items="view detail chip" />
        <Tools divided width={139} items="length horiz vert radius diameter angle angle3 extent v chain balloon axo" />
        <Tools divided width={127} items="finish note cosmetic v cube blocks centre v lines v frame weld" />
        <Tools divided width={88} items="target v thread v cross circle v parallel v" />
        <Tools divided width={105} items="chainDim v coord v chamfer v arc person v plot v" />
        <Tools divided width={29} items="stack stack" />
        <Tools divided width={63} items="stairs stairsDark landscape filled forbid" />
        <Tools width={134} items="letterA leader rich vertex v midline v line2 eraser pen eye drum" />
      </Toolbar>

      <Main>
        <ComboView />
        <Workspace>
          <Viewport>
            <SolidModel />
            <Navigation />
            <Axes />
          </Viewport>
          <DocumentTabs>
            {documents.map(([icon, title, active]) => (
              <DocumentTab key={title} $active={active}>
                <TabTitle>
                  <Icon name={icon} size={9} />
                  {title}
                </TabTitle>
                <TabClose $active={active} aria-label={`Close ${title}`}>
                  <Icon name="close" size={5} />
                </TabClose>
              </DocumentTab>
            ))}
          </DocumentTabs>
        </Workspace>
      </Main>

      <StatusBar>
        <StatusText>Valid, Internal name: Symbol</StatusText>
        <NavStyle>
          <Icon name="mouse" size={8} />
          TinkerCAD
          <Icon name="caret" size={6} />
        </NavStyle>
        <Dimensions>136.39 mm x 81.87 mm</Dimensions>
      </StatusBar>
    </Window>
  );
}
